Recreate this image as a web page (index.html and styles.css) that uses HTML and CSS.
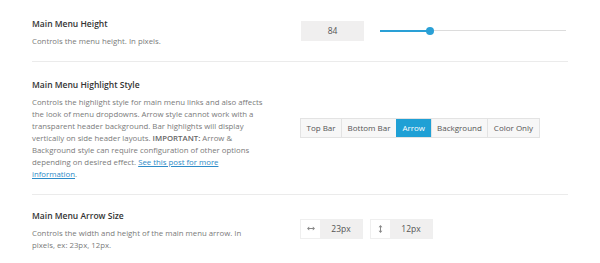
FILE: index.html
```html
<!DOCTYPE html>
<html>
<head>
<meta charset="utf-8">
<link rel="stylesheet" href="styles.css">
</head>
<body>
<div class="options">
  <div class="row">
    <div class="info">
      <h3 class="title">Main Menu Height</h3>
      <p class="desc">Controls the menu height. In pixels.</p>
    </div>
    <div class="control">
      <div class="num-box">84</div>
      <div class="slider">
        <div class="track-fill" style="width:50px"></div>
        <div class="thumb" style="left:50px"></div>
      </div>
    </div>
  </div>
  <div class="row">
    <div class="info">
      <h3 class="title">Main Menu Highlight Style</h3>
      <p class="desc">Controls the highlight style for main menu links and also affects the look of menu dropdowns. Arrow style cannot work with a transparent header background. Bar highlights will display vertically on side header layouts. <strong>IMPORTANT:</strong> Arrow &amp; Background style can require configuration of other options depending on desired effect. <a href="#" class="link">See this post for more information</a>.</p>
    </div>
    <div class="control">
      <div class="btn-group">
        <span class="btn">Top Bar</span>
        <span class="btn">Bottom Bar</span>
        <span class="btn active">Arrow</span>
        <span class="btn">Background</span>
        <span class="btn">Color Only</span>
      </div>
    </div>
  </div>
  <div class="row last">
    <div class="info">
      <h3 class="title">Main Menu Arrow Size</h3>
      <p class="desc">Controls the width and height of the main menu arrow. In pixels, ex: 23px, 12px.</p>
    </div>
    <div class="control">
      <div class="dim">
        <span class="dim-icon"><svg width="8" height="5" viewBox="0 0 8 5"><path d="M0 2.5 L2.2 0.6 L2.2 2 L5.8 2 L5.8 0.6 L8 2.5 L5.8 4.4 L5.8 3 L2.2 3 L2.2 4.4 Z" fill="#888"/></svg></span>
        <span class="dim-val">23px</span>
      </div>
      <div class="dim">
        <span class="dim-icon"><svg width="5" height="8" viewBox="0 0 5 8"><path d="M2.5 0 L4.4 2.2 L3 2.2 L3 5.8 L4.4 5.8 L2.5 8 L0.6 5.8 L2 5.8 L2 2.2 L0.6 2.2 Z" fill="#888"/></svg></span>
        <span class="dim-val">12px</span>
      </div>
    </div>
  </div>
</div>
</body>
</html>
```
FILE: styles.css
```css
* { box-sizing: border-box; }
body {
  margin: 0;
  background: #fff;
  font-family: "Open Sans", "Noto Sans", sans-serif;
  color: #333;
}
.options {
  width: 536px;
  margin-left: 32px;
  padding-top: 1px;
}
.row {
  display: flex;
  align-items: center;
  padding: 17px 0 14px;
  border-bottom: 1px solid #ebebeb;
}
.row.last { border-bottom: none; padding-top: 15px; }
.info {
  width: 231px;
  flex: none;
}
.title {
  margin: 0 0 5px;
  font-size: 8.5px;
  line-height: 12px;
  font-weight: 600;
  color: #333;
}
.desc {
  margin: 0;
  font-size: 7.8px;
  line-height: 12px;
  color: #7a7a7a;
}
.desc strong { font-weight: 600; color: #666; }
.link { color: #2d8ac7; }
.control {
  margin-left: 37px;
  padding-bottom: 4px;
  display: flex;
  align-items: center;
  gap: 7px;
  flex: 1;
}
.num-box {
  width: 63px;
  height: 20px;
  margin-left: 1px;
  background: #f0efef;
  font-size: 8.5px;
  color: #555;
  display: flex;
  align-items: center;
  justify-content: center;
}
.slider {
  position: relative;
  margin-left: 9px;
  width: 186px;
  height: 1px;
  background: #dcdcdc;
}
.track-fill {
  position: absolute;
  left: 0;
  top: -0.5px;
  height: 2px;
  background: #2aa0d6;
}
.thumb {
  position: absolute;
  top: -3.5px;
  width: 8px;
  height: 8px;
  margin-left: -4px;
  border-radius: 50%;
  background: #2aa0d6;
}
.btn-group {
  display: flex;
  border: 1px solid #e3e3e3;
}
.btn {
  height: 18px;
  padding: 0 5.5px;
  font-size: 8px;
  color: #555;
  background: #f7f7f7;
  display: flex;
  align-items: center;
  border-left: 1px solid #e3e3e3;
}
.btn:first-child { border-left: none; }
.btn.active { background: #1fa0d5; color: #fff; border-left-color: #1fa0d5; }
.dim {
  display: flex;
  height: 20px;
  border: 1px solid #efefef;
}
.dim-icon {
  width: 19px;
  background: #fff;
  display: flex;
  align-items: center;
  justify-content: center;
}
.dim-val {
  width: 42px;
  background: #f0efef;
  font-size: 8.5px;
  color: #555;
  display: flex;
  align-items: center;
  justify-content: center;
}
```
